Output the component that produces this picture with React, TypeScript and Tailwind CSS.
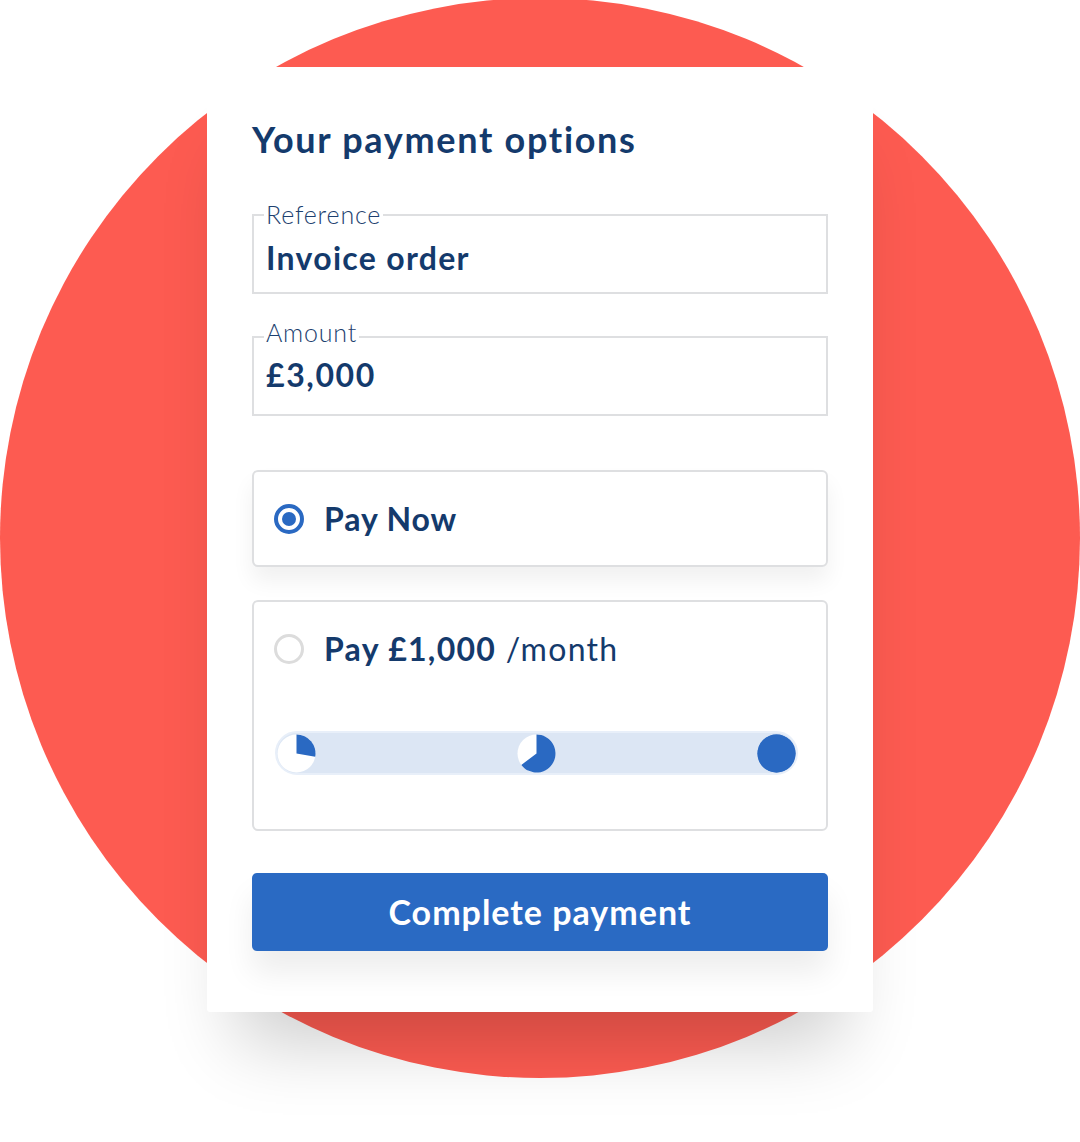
import React from "react";

const NAVY = "text-[#143a6c]";

function Pie({ angle }: { angle: number }) {
  const r = 19;
  const c = 19.5;
  let wedge: React.ReactNode;
  if (angle >= 360) {
    wedge = <circle cx={c} cy={c} r={r} fill="#2a69c2" />;
  } else {
    const rad = (angle * Math.PI) / 180;
    const x = c + r * Math.sin(rad);
    const y = c - r * Math.cos(rad);
    const large = angle > 180 ? 1 : 0;
    wedge = (
      <path
        d={`M ${c} ${c} L ${c} ${c - r} A ${r} ${r} 0 ${large} 1 ${x.toFixed(2)} ${y.toFixed(2)} Z`}
        fill="#2a69c2"
      />
    );
  }
  return (
    <svg width="39" height="39" viewBox="0 0 39 39" className="block shrink-0">
      <circle cx={c} cy={c} r={r} fill={angle >= 360 ? "#2a69c2" : "#ffffff"} />
      {wedge}
    </svg>
  );
}

export default function App() {
  return (
    <div
      className="relative w-[1080px] h-[1142px] bg-white overflow-hidden"
      style={{ fontFamily: "Lato, 'Open Sans', sans-serif" }}
    >
      <div className="absolute left-0 top-[-2px] w-[1080px] h-[1080px] rounded-full bg-[#fd5b51]" />
      <div className="relative ml-[207px] mt-[67px] w-[666px] h-[945px] bg-white rounded-[3px] shadow-[0_60px_70px_-30px_rgba(0,0,0,0.2)] px-[45px] pt-[50px] pb-[61px] flex flex-col">
        <h1 className={`text-[36px] leading-[44px] font-bold tracking-[1.7px] ${NAVY}`}>Your payment options</h1>

        <div className="mt-[53px] relative h-[80px] border-2 border-[#dedfe1] flex items-center pt-[8px] pl-[12px]">
          <span className="absolute top-[-15px] left-[10px] px-[2px] bg-white text-[25px] leading-[26px] font-light tracking-[0.8px] text-[#1d3f6f]">
            Reference
          </span>
          <span className={`text-[32px] leading-[40px] font-bold tracking-[1.3px] ${NAVY}`}>Invoice order</span>
        </div>

        <div className="mt-[42px] relative h-[80px] border-2 border-[#dedfe1] flex items-center pb-[2px] pl-[12px]">
          <span className="absolute top-[-19px] left-[10px] px-[2px] bg-white text-[25px] leading-[26px] font-light tracking-[0.8px] text-[#1d3f6f]">
            Amount
          </span>
          <span className={`text-[32px] leading-[40px] font-bold tracking-[1.6px] ${NAVY}`}>£3,000</span>
        </div>

        <div className="mt-[54px] h-[97px] border-2 border-[#dedfe1] rounded-[6px] bg-white shadow-[0_14px_22px_rgba(0,0,0,0.06)] flex items-center pl-[20px] gap-[20px]">
          <span className="w-[30px] h-[30px] rounded-full border-[4px] border-[#2a69c2] flex items-center justify-center">
            <span className="w-[14px] h-[14px] rounded-full bg-[#2a69c2]" />
          </span>
          <span className={`text-[32px] leading-[40px] font-bold tracking-[0.9px] ${NAVY}`}>Pay Now</span>
        </div>

        <div className="mt-[33px] h-[231px] border-2 border-[#dedfe1] rounded-[6px] bg-white pt-[27px] pb-[54px] flex flex-col">
          <div className="flex items-center pl-[20px] gap-[20px] h-[40px]">
            <span className="w-[30px] h-[30px] rounded-full border-[3px] border-[#dcdcdc]" />
            <span className={`text-[32px] leading-[40px] tracking-[1.3px] ${NAVY}`}>
              <span className="font-bold">Pay £1,000</span> /month
            </span>
          </div>
          <div className="mt-[62px] ml-[21px] w-[523px] h-[44px] rounded-full bg-[#dce6f4] border-[2px] border-[#e8eff9] flex items-center justify-between">
            <Pie angle={100} />
            <Pie angle={233} />
            <Pie angle={360} />
          </div>
        </div>

        <button className="mt-[42px] h-[78px] w-full rounded-[5px] bg-[#2a6ac3] text-white text-[34px] leading-[40px] font-bold tracking-[1px] shadow-[0_22px_30px_rgba(0,0,0,0.07)]">
          Complete payment
        </button>
      </div>
    </div>
  );
}
